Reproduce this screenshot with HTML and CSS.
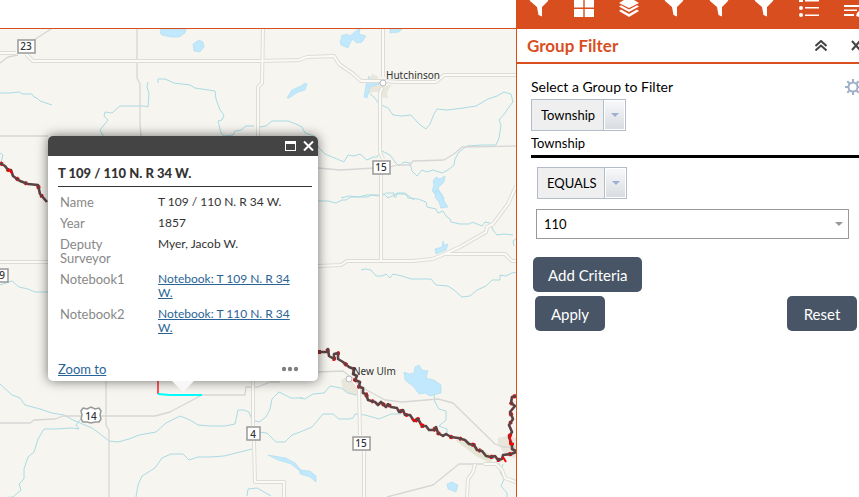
FILE: index.html
```
<!DOCTYPE html>
<html lang="en">

<head>
  <meta charset="UTF-8" />
  <title>Group Filter</title>
  <meta name="viewport" content="width=device-width, initial-scale=1.0">
  <link rel="stylesheet" href="styles.css">
</head>

<body>
  <main class="map-side">
    <div class="map-header"></div>
    <div class="map">
      <svg class="map-canvas" viewBox="0 29 516 468" preserveAspectRatio="xMinYMin slice" role="img" aria-label="Map">
        <defs>
          <g id="highway-lines">
            <path d="M0 53h16M26 54l7 7h227l39-1 8-3 27-1 5 8 13 9 9 8h22l17 1h36l8-7h72" />
            <path d="M263 29l-1 54-4 4v49M383 29v48M382 88l-2 5v59l3 7M381 175v86" />
            <path d="M0 262h48M318 266l23-1 6-4h66l19-2 8-3 20-9 26-15 1-5 6-3 15-20 8-18M445 254h60l7 7h4" />
            <path d="M351 378l8 12 1 45M364 451v46M475 464l-2 8-5 7-1 18M484 464l12 0 6 6 3 8 11 4" />
            <path d="M253 381v46M254 441l1 41h29v15" />
          </g>
          <g id="route-lines">
            <path d="M0 163L5 166 8 170 11 170 13 176 20 181 28 184 38 185 40 194 47 202" />
            <path d="M318 352L327 352 328 349 329 356 334 359 334 354 338 353 338 359 343 362 349 367 354 369 353 374 357 376 355 380 360 382 359 387 363 388 363 393 366 394 368 400 375 402 378 405 381 402 386 407 388 404 391 407 397 408 399 412 403 410 405 415 410 415 414 421 418 419 422 426 426 426 429 430 434 430 436 427 438 433 443 436 446 434 451 437 458 438 465 440 469 444 474 445 477 450 482 451 486 456 491 457 495 456 498 460 502 459 503 455 511 454 516 452" />
            <path d="M516 396l-4 1-1 6 4 3-5 6 3 7-4 6 3 7-3 5 3 8 0 4 4 2" />
          </g>
        </defs>

        <!-- towns and parks -->
        <g class="urban">
          <path d="M368 82l4-8 5 2 2 4 5-1v8l8-3-5 8 1 6h-5l-2-6h-8l-5 2v-12z" />
          <path d="M341 380l9-5 8 5 4 14-6 2-13-6z" />
          <path d="M498 438l9-2 9 2v20l-10-2-8-12z" />
          <path class="park" d="M455 440l14 1 25 16-4 6-14-7z" />
        </g>

        <!-- lakes -->
        <g class="lake">
          <path d="M161 29h25l-1 4-6 4h-8l-9-2-2-2z" />
          <path d="M199 40l4 2 1 5-4 5-6-1-1-7z" />
          <path d="M341 36l6-2 3 2 7-6 3-1-1 5 7 2-4 6-5 1-5-4-4 9-7-3-1-4 2-4z" />
          <path d="M390 29h12l-3 3-9 1z" />
          <path d="M287 98l5-8 9-4 4-3 2 1-2 6-7 2-9 6z" />
          <path d="M369 76l1 6 11 1-11 4-3 11-3-1 2-12z" />
          <path d="M433 181l3-4 4 2 5-3-1 6-6 6 3 6 3 4-1 5-4-1-3-7-4-4 2-6z" />
          <path d="M436 190l6 4 1 5 5 8-7 1-2-6-4-5z" />
          <path d="M435 249l7-2 1-6 1 4 4-1-2 6-10 4z" />
          <path d="M404 372l5 2 5-1 1-6 4-2 3 5 6 1-2 7 8 2 7 5v8l-11 3-5-3-6 1-5-7-9-7z" />
          <path d="M447 484l5-2 6 3-2 7-8-3z" />
          <path d="M300 470l10 1 6 5v6l-6-5-10-3z" />
          <path d="M268 455l18 3 9 5 6 7v2l-10-8-13-4z" />
        </g>

        <!-- rivers -->
        <g class="river">
          <path d="M0 93h10l9-1 4 2h9l2 3 3 1 3 3 12 4" />
          <path d="M103 136l-3-6 4-5 4-5-4-4 1-4 7 1 8-7h24l4 1 1-14-2-6 1-5" />
          <path d="M158 83v-4h7l9 4 16 2 5 3 20 3 1 8 4 11 4 5-2 5-4 1 3 12 3 3 9-1 2-4 6-1 5-4h8" />
          <path d="M0 153l3 2-2 7" />
          <path d="M260 127l6-1 6-5 16 0 8 3 6 3 3 6 9 3 5 12 6 6 12 5 7 3 4-7 6 1 6-2 7 6 6-3h4l5-6 8 4 5 7 4 4 5-4 6 1 2 8 5 5 5-6 5 2 6-2 9 3 6-3 6-5 1-6 4-7 8-6 15-1h14l3-7 2-13-2-5 6-7 4-6 4-5-2-8-7-2-7 4-9 3-12 7-13 2-16 2-10-1-3 5-4 10-4 5-7-5-8-9-9 1-9-1-5-7-9-4-5-7-4-3" />
          <path d="M341 198l8-2 9 1 9-2 12 0 5-1 4 4 8-4 10 0 8 6" />
          <path d="M318 201l10 0 8 2 6-3 4 0 5-3 17 0 3-2 8 1 4-1 3-2 8 0v4h2l1-4h8l3 5 10 1 8 3 1 5 9 2 2 4 5-2 3 5 4 3 1 3 9 2 10 0 2-2 10 4 3-4 5 1 3 7 4 5 7-1 9 1" />
          <path d="M516 239l-3 2 1 5" />
          <path d="M361 270l4-1 6 1 5 6 6 0 4-2 4 4 3-4 9 2 9 3 20 0 5 6 12 1 6 4 8 7 8-1 7-6 9-4 6-6 8 0v-5l6 1 6-3 5-1" />
          <path d="M0 285l12-4 7 6 9 2 7 3 13 0" />
          <path d="M0 384l12 11 8 3 5 7 15 4 12 4 12 2 9 5 7 3 12 5 7 5 10 8 9 1 11-3 10-4 17-3 10-9 14-7 10 4 8 5 12 1 15 0 10-2 3-14 6 0 5 2 3 8 7 2 7-5 4-8 2-10 7-7 12 6h12" />
          <path d="M80 420l-4 5 3 4-7-1-17 1-11 0-6 10-4 13-6 5-4 12 0 10-5 5 2 6-8 7-13 1" />
          <path d="M136 497l2-12 4-9 13-8 7-10 9-4h12l6 6 9-3 12 0 14-1 8-2 20-5" />
          <path d="M259 432l8 1 9 9h9l7-7 8-3M247 496l1-7 9-1 14 8" />
          <path d="M300 398l5 1 8-5 11-1 6-7 11 2 7 5 8 2M300 432l12-5 11-13 10 0 6 5 10 0 4-1 2-4 10 1 14 4 12-5 9 0 5-3" />
          <path d="M434 395l1 7 4 7 7 2v9l-7 6 8 3v7M503 464l-3 8 4 7-3 7 6 7v4" />
        </g>

        <!-- minor roads -->
        <g class="road">
          <path d="M0 63l8-6 10-2M34 40l17-11M137 29v49l3 6v40l1 12M0 136h48" />
          <path d="M318 168l22 2 35-2M390 167l7-2h13l3-4 31-1 10-6 8-7 54-1" />
          <path d="M318 372l25-1 10 8 10 9 22 12 17 2 36-3 15 4 42 41 8 3h13M387 497l46-12 26-21h41" />
          <path d="M106 381v44l3 5v67M0 423h30l4-3 21-1 8-3h92l15-4 32-17M202 395h43l1-8h12l12-5h10" />
        </g>

        <!-- highways: casing first, then the white centre line -->
        <use class="highway" href="#highway-lines" />
        <use class="highway-fill" href="#highway-lines" />

        <!-- surveyed routes -->
        <use class="route-edge" href="#route-lines" />
        <use class="route" href="#route-lines" />
        <path class="route-spur" d="M503 457l3 5M510 434v10h4M8 169l4 4M412 419l5 3M420 424l4 1" />
        <path class="edge-red" d="M158 381v13" />
        <path class="edge-cyan" d="M158 394l12 1h32" />

        <circle class="town" cx="383" cy="83" r="3" />
        <circle class="town" cx="349" cy="379" r="3" />
        <g class="town-name">
          <text x="386" y="79">Hutchinson</text>
          <text x="353" y="375">New Ulm</text>
        </g>

        <g class="shield">
          <rect x="18" y="40" width="17" height="13" />
          <rect x="373" y="161" width="17" height="13" />
          <rect x="353" y="437" width="17" height="13" />
          <rect x="247" y="427" width="13" height="13" />
          <rect x="-8" y="269" width="16" height="13" />
          <path d="M83 408l4 1 4-2 4 2 4-1 2 3-1 4 1 4-2 3-4 0-4 1-4-1-4 0-2-3 1-4-1-4z" />
          <text x="26" y="50">23</text>
          <text x="381" y="171">15</text>
          <text x="361" y="447">15</text>
          <text x="253" y="438">4</text>
          <text x="2" y="279">9</text>
          <text x="91" y="420">14</text>
        </g>
      </svg>

      <section class="popup">
        <div class="popup-titlebar">
          <button type="button" aria-label="Maximize">
            <svg width="11" height="10" viewBox="0 0 11 10"><path d="M0 0h11v10H0zM1 3v6h9V3z" fill="#fff" fill-rule="evenodd" /></svg>
          </button>
          <button type="button" aria-label="Close">
            <svg width="11" height="10" viewBox="0 0 11 10"><path d="M1 .5l9 9M10 .5l-9 9" stroke="#fff" stroke-width="2" /></svg>
          </button>
        </div>
        <div class="popup-body">
          <h2>T 109 / 110 N. R 34 W.</h2>
          <table>
            <tr><th scope="row">Name</th><td>T 109 / 110 N. R 34 W.</td></tr>
            <tr><th scope="row">Year</th><td>1857</td></tr>
            <tr><th scope="row">Deputy Surveyor</th><td>Myer, Jacob W.</td></tr>
            <tr><th scope="row">Notebook1</th><td><a href="#">Notebook: T 109 N. R 34 W.</a></td></tr>
            <tr><th scope="row">Notebook2</th><td><a href="#">Notebook: T 110 N. R 34 W.</a></td></tr>
          </table>
        </div>
        <div class="popup-actions">
          <a href="#">Zoom to</a>
          <button type="button" aria-label="More">
            <svg width="18" height="6" viewBox="0 0 18 6" fill="#808080"><circle cx="3" cy="3" r="2.2" /><circle cx="9" cy="3" r="2.2" /><circle cx="15" cy="3" r="2.2" /></svg>
          </button>
        </div>
      </section>
    </div>
  </main>

  <aside class="panel">
    <nav class="toolbar">
      <button type="button" aria-label="Filter">
        <svg viewBox="0 0 20 20"><path d="M0-3h20l-1 4-6 6v9.500l-3.500-1.500L8 7 1 1z" /></svg>
      </button>
      <button type="button" aria-label="Basemap Gallery">
        <svg viewBox="0 0 20 20"><path d="M0-2h9.300v9.500H0zM10.700-2H20v9.500h-9.300zM0 9h9.300v8H0zM10.700 9H20v8h-9.300z" /></svg>
      </button>
      <button type="button" aria-label="Layers">
        <svg viewBox="0 0 20 20"><path d="M0 3l10-6 10 6-10 5zM0 6.500l2-1.200 8 4.200 8-4.200 2 1.200-10 5.500zM0 11l2-1.500 8 4.500 8-4.500 2 1.500-10 6z" /></svg>
      </button>
      <button type="button" aria-label="Filter">
        <svg viewBox="0 0 20 20"><path d="M0-3h20l-1 4-6 6v9.500l-3.500-1.500L8 7 1 1z" /></svg>
      </button>
      <button type="button" aria-label="Filter">
        <svg viewBox="0 0 20 20"><path d="M0-3h20l-1 4-6 6v9.500l-3.500-1.500L8 7 1 1z" /></svg>
      </button>
      <button type="button" aria-label="Group Filter">
        <svg viewBox="0 0 20 20"><path d="M0-3h20l-1 4-6 6v9.500l-3.500-1.500L8 7 1 1z" /></svg>
      </button>
      <button type="button" aria-label="Legend">
        <svg viewBox="0 0 20 20"><path d="M0-2h4v4H0zM6 0h14v1.500H6zM6 7h14v1.500H6zM6 14.500h14V16H6z" /><circle cx="2" cy="8" r="2" /><circle cx="2" cy="15" r="2" /></svg>
      </button>
      <button type="button" aria-label="Edit">
        <svg viewBox="0 0 20 20"><path d="M0 5h17v2H0zM0 9.500h13v1.500H0zM0 14h10v2H0zM12 16l1-3 7-7v7l-5 4z" /></svg>
      </button>
    </nav>

    <header class="panel-header">
      <h1>Group Filter</h1>
      <button type="button" aria-label="Collapse">
        <svg width="12" height="11" viewBox="0 0 12 11"><path d="M.500 6L6 1l5.500 5M.500 10.500L6 5.500l5.500 5" /></svg>
      </button>
      <button type="button" aria-label="Close panel">
        <svg width="10" height="11" viewBox="0 0 10 11"><path d="M1 1l8 9M9 1l-8 9" /></svg>
      </button>
    </header>

    <form class="filter">
      <div class="group-row">
        <label for="group">Select a Group to Filter</label>
        <button type="button" class="gear" aria-label="Settings">
          <svg width="16" height="16" viewBox="0 0 16 16"><circle cx="8" cy="8" r="4.500" /><path d="M8 0v3M8 13v3M0 8h3M13 8h3M2.300 2.300l2.200 2.200M11.500 11.500l2.200 2.200M2.300 13.700l2.200-2.200M11.500 4.500l2.200-2.200" /></svg>
        </button>
      </div>
      <select id="group" class="drop group">
        <option>Township</option>
      </select>
      <fieldset>
        <legend>Township</legend>
        <select class="drop operator" aria-label="Operator">
          <option>EQUALS</option>
        </select>
        <select class="value" aria-label="Value">
          <option>110</option>
        </select>
      </fieldset>
      <button type="button" class="btn add">Add Criteria</button>
      <div class="btn-row">
        <button type="button" class="btn">Apply</button>
        <button type="reset" class="btn">Reset</button>
      </div>
    </form>
  </aside>
</body>

</html>
```

FILE: styles.css
```
* {
  box-sizing: border-box;
}

body {
  margin: 0;
  height: 100vh;
  display: flex;
  overflow: hidden;
  background: #fff;
  color: #000;
  font-family: Lato, "Open Sans", sans-serif;
  font-size: 13px;
}

button {
  padding: 0;
  border: none;
  background: none;
  font-family: inherit;
  cursor: pointer;
}

/* map */
.map-side {
  flex: 1;
  min-width: 0;
  display: flex;
  flex-direction: column;
}

.map-header {
  height: 29px;
  border-bottom: 1px solid #d94e1f;
}

.map {
  flex: 1;
  min-height: 0;
  position: relative;
  overflow: hidden;
  background: #f6f5f0;
}

.map-canvas {
  display: block;
  width: 100%;
  height: 100%;
}

.urban {
  fill: #e9e6dc;
}

.park {
  fill: #e4e6d4;
}

.lake {
  fill: #c1e8fc;
  stroke: #a5d8ea;
  stroke-width: 0.5;
}

.river,
.road,
.highway,
.highway-fill,
.route,
.route-edge,
.route-spur {
  fill: none;
  stroke-linejoin: round;
}

.river {
  stroke: #aadbe3;
}

.road {
  stroke: #d6d6d5;
  stroke-width: 1.3;
}

.highway {
  stroke: #dedcd6;
  stroke-width: 4;
}

.highway-fill {
  stroke: #fafaf7;
  stroke-width: 2;
}

.route-edge {
  stroke: #f00;
  stroke-width: 4;
  stroke-dasharray: 3 7 2 12;
}

.route {
  stroke: #5e4143;
  stroke-width: 2.6;
}

.route-spur {
  stroke: #f00;
  stroke-width: 2;
}

.edge-red {
  stroke: #f55;
  stroke-width: 2;
}

.edge-cyan {
  fill: none;
  stroke: #0ff;
  stroke-width: 2;
}

.town {
  fill: #fff;
  stroke: #bbb;
}

.town-name {
  fill: #333;
  font-family: "Noto Sans", sans-serif;
  font-size: 10px;
}

.shield {
  fill: #fff;
  stroke: #999;
  stroke-width: 1.5;
}

.shield text {
  fill: #333;
  stroke: none;
  font-family: "Noto Sans", sans-serif;
  font-size: 10px;
  font-weight: 500;
  text-anchor: middle;
}

/* popup */
.popup {
  position: absolute;
  top: 107px;
  left: 48px;
  width: 270px;
  border-radius: 5px;
  background: #fff;
  box-shadow: 0 0 12px rgba(0, 0, 0, 0.55);
  color: #333;
}

.popup::after {
  content: "";
  position: absolute;
  top: 100%;
  left: 124px;
  border: 11px solid transparent;
  border-top-color: #f8f8f8;
  border-bottom: none;
}

.popup-titlebar {
  height: 20px;
  padding: 0 4px;
  display: flex;
  justify-content: flex-end;
  align-items: center;
  gap: 7px;
  border-radius: 5px 5px 0 0;
  background: #444;
}

.popup svg,
.panel svg {
  display: block;
}

.popup-body {
  padding: 9px 6px 15px 10px;
}

.popup h2 {
  margin: 0 0 8px;
  padding-bottom: 5px;
  border-bottom: 1px solid #333;
  font-size: 13px;
  font-weight: 900;
  line-height: 16px;
}

.popup table {
  width: 100%;
  border-collapse: collapse;
  table-layout: fixed;
  line-height: 14px;
}

.popup th,
.popup td {
  padding: 0 14px 7px 2px;
  text-align: left;
  vertical-align: top;
}

.popup th {
  width: 98px;
  color: #888;
  font-weight: normal;
}

.popup td {
  font-size: 12px;
}

.popup a {
  color: #2a6496;
}

.popup-actions {
  height: 24px;
  padding: 0 19px 0 10px;
  display: flex;
  align-items: center;
  justify-content: space-between;
}

/* panel */
.panel {
  flex: 0 0 343px;
  overflow: hidden;
  border-left: 1px solid #d94e1f;
}

.toolbar {
  height: 29px;
  display: flex;
  background: #d94e1f;
}

.toolbar button {
  flex: 0 0 45px;
  padding-right: 2px;
  display: flex;
  justify-content: center;
}

.toolbar svg {
  width: 20px;
  height: 20px;
  fill: #fff;
}

.panel-header {
  width: 350px;
  height: 35px;
  padding: 0 6px 0 10px;
  display: flex;
  align-items: center;
  gap: 24px;
  border-bottom: 2px solid #d94e1f;
}

.panel-header h1 {
  flex: 1;
  margin: 0;
  color: #d94e1f;
  font-size: 17px;
  font-weight: bold;
}

.panel-header svg {
  fill: none;
  stroke: #444;
  stroke-width: 2;
}

.filter {
  width: 350px;
  padding: 14px 0 0 14px;
}

.group-row {
  height: 21px;
  padding: 0 6px 4px 0;
  display: flex;
  align-items: center;
  justify-content: space-between;
  font-size: 14px;
}

.gear svg {
  fill: none;
  stroke: #9fb0c9;
  stroke-width: 2;
}

select {
  display: block;
  appearance: none;
  border-radius: 0;
  color: #000;
  font-family: inherit;
  font-size: 13px;
}

.drop {
  height: 32px;
  padding: 0 22px 0 9px;
  border: 1px solid #b5bcc9;
  background:
    url("data:image/svg+xml,%3Csvg xmlns='http://www.w3.org/2000/svg' width='8' height='4'%3E%3Cpath d='M0 0h8L4 4z' fill='%239bb0d3'/%3E%3C/svg%3E") right 6px center no-repeat,
    linear-gradient(#f7f8fa, #d9dce0) right 1px center / 19px 28px no-repeat,
    linear-gradient(#fff, #fff) right / 21px 100% no-repeat,
    linear-gradient(#b5bcc9, #b5bcc9) right / 22px 100% no-repeat,
    #efefef;
}

.group {
  width: 95px;
}

.operator {
  width: 90px;
  margin: 9px 0 10px 6px;
}

fieldset {
  margin: 0;
  padding: 0;
  border: none;
}

legend {
  width: 100%;
  height: 27px;
  padding: 4px 0 0;
  border-bottom: 3px solid #000;
  line-height: 16px;
}

.value {
  width: calc(100% - 23px);
  height: 30px;
  margin-left: 5px;
  padding: 0 7px;
  border: 1px solid #999;
  background: #fff url("data:image/svg+xml,%3Csvg xmlns='http://www.w3.org/2000/svg' width='8' height='4'%3E%3Cpath d='M0 0h8L4 4z' fill='%23999'/%3E%3C/svg%3E") right 5px center no-repeat;
}

.btn {
  height: 35px;
  padding: 0 15px;
  border-radius: 5px;
  background: #485566;
  color: #fff;
  font-size: 15px;
}

.add {
  margin: 18px 0 4px 2px;
}

.btn-row {
  padding: 0 10px 0 4px;
  display: flex;
  justify-content: space-between;
}

.btn-row .btn {
  width: 70px;
}
```
